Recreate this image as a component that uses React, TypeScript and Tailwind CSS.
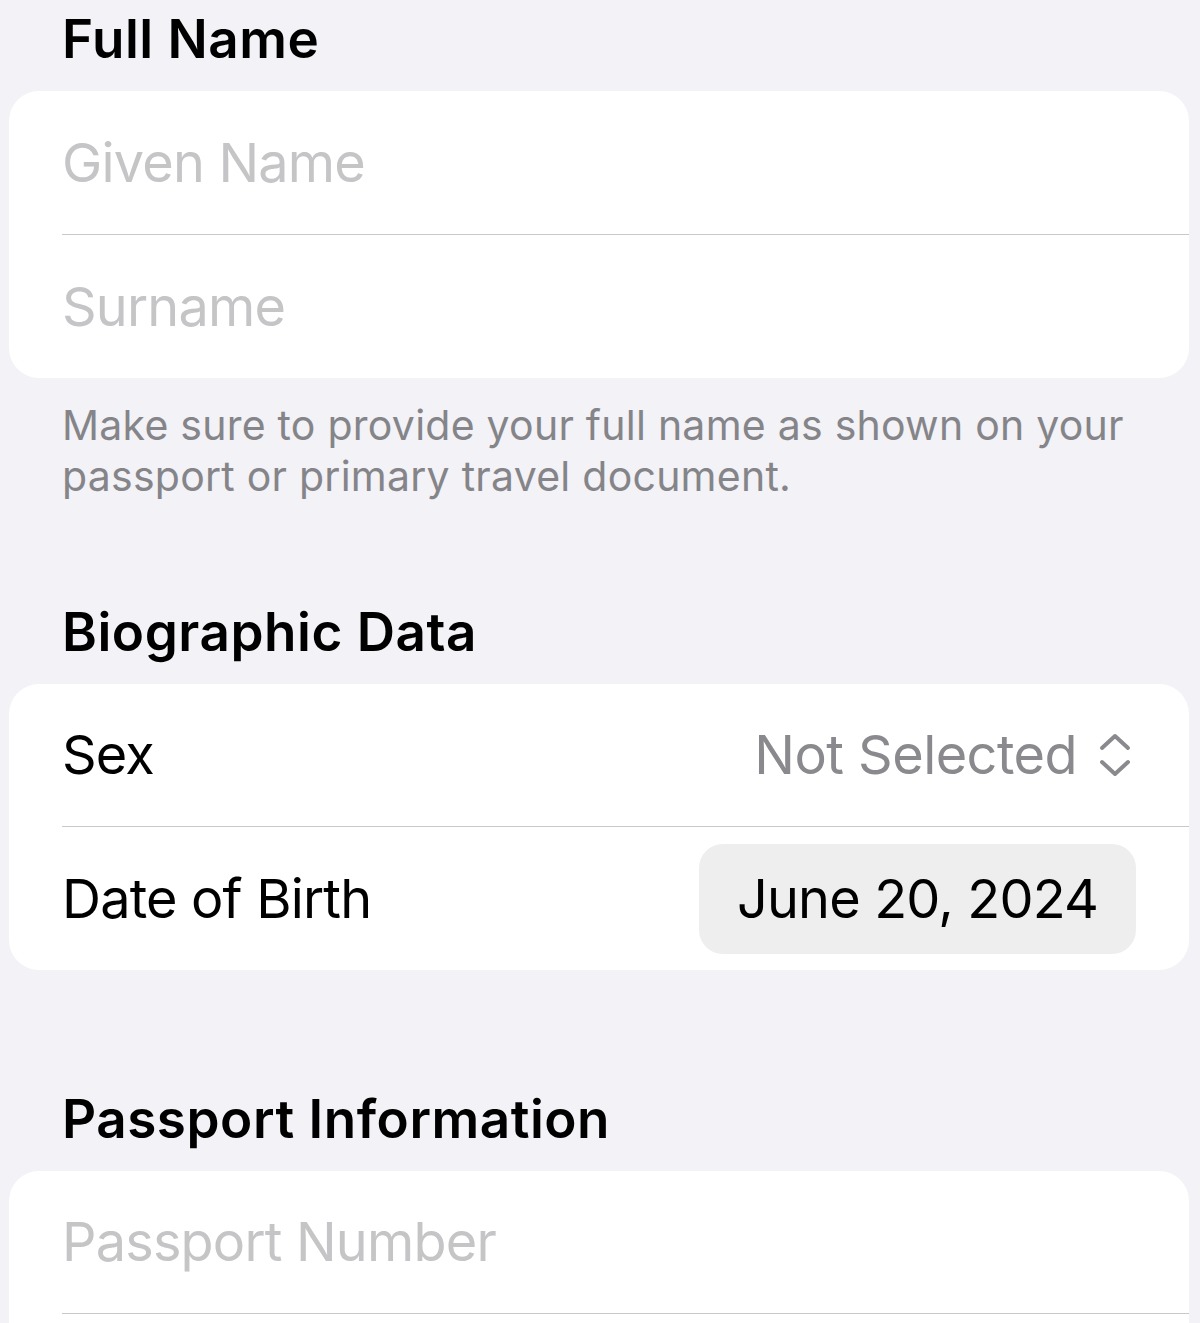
import React from "react";

function Heading({ children, className = "" }: { children: React.ReactNode; className?: string }) {
  return (
    <div className={`pl-[53px] text-[53px] leading-[62px] font-semibold tracking-[0.01em] text-black ${className}`}>
      {children}
    </div>
  );
}

function Divider() {
  return <div className="ml-[53px] h-px bg-[#c8c8ca]" />;
}

function PlaceholderRow({ label, h }: { label: string; h: string }) {
  return (
    <div className={`flex items-center pl-[53px] pr-[53px] ${h}`}>
      <span className="text-[54px] leading-[66px] text-[#c5c5c7] tracking-[-0.015em]">{label}</span>
    </div>
  );
}

function UpDownChevron() {
  return (
    <svg width="32" height="46" viewBox="0 0 32 46" fill="none" className="shrink-0">
      <path d="M3 16 L16 4 L29 16" stroke="#8a8a8e" strokeWidth="4" strokeLinecap="round" strokeLinejoin="round" />
      <path d="M3 30 L16 42 L29 30" stroke="#8a8a8e" strokeWidth="4" strokeLinecap="round" strokeLinejoin="round" />
    </svg>
  );
}

export default function App() {
  return (
    <div
      className="h-[1323px] bg-[#f2f2f7] pl-[9px] pr-[11px] overflow-hidden"
      style={{ fontFamily: "Inter, 'Noto Sans', 'Liberation Sans', sans-serif" }}
    >
      {/* Full name section */}
      <Heading className="pt-[8px] mb-[21px]">Full Name</Heading>
      <div className="bg-white rounded-[30px] overflow-hidden">
        <PlaceholderRow label="Given Name" h="h-[143px]" />
        <Divider />
        <PlaceholderRow label="Surname" h="h-[143px]" />
      </div>
      <p className="mt-[22px] pl-[53px] pr-[40px] text-[41px] leading-[51px] text-[#858589] tracking-[0.006em]">
        Make sure to provide your full name as shown on your passport or primary travel document.
      </p>

      {/* Biographic data section */}
      <Heading className="mt-[99px] mb-[21px]">Biographic Data</Heading>
      <div className="bg-white rounded-[30px] overflow-hidden">
        <div className="flex items-center justify-between h-[142px] pl-[53px] pr-[58px]">
          <span className="text-[54px] leading-[66px] text-black tracking-[-0.015em]">Sex</span>
          <div className="flex items-center gap-[22px]">
            <span className="text-[54px] leading-[66px] text-[#8a8a8e] tracking-[-0.01em]">Not Selected</span>
            <UpDownChevron />
          </div>
        </div>
        <Divider />
        <div className="flex items-center justify-between h-[143px] pl-[53px] pr-[53px]">
          <span className="text-[54px] leading-[66px] text-black tracking-[-0.015em]">Date of Birth</span>
          <div className="h-[110px] w-[437px] rounded-[24px] bg-[#eeeeef] flex items-center justify-center">
            <span className="text-[54px] leading-[66px] text-black tracking-[-0.015em]">June 20, 2024</span>
          </div>
        </div>
      </div>

      {/* Passport section */}
      <Heading className="mt-[118px] mb-[21px]">Passport Information</Heading>
      <div className="bg-white rounded-t-[30px] overflow-hidden">
        <PlaceholderRow label="Passport Number" h="h-[142px]" />
        <Divider />
        <div className="h-[20px]" />
      </div>
    </div>
  );
}
